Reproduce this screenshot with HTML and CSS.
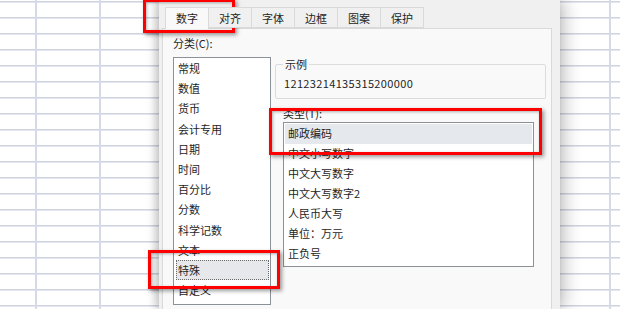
FILE: index.html
```html
<!DOCTYPE html>
<html lang="zh-CN">
<head>
<meta charset="utf-8">
<title>设置单元格格式</title>
<link rel="stylesheet" href="styles.css">
</head>
<body>
<div class="dialog">
  <div class="tabs">
    <div class="tab active">数字</div>
    <div class="tab">对齐</div>
    <div class="tab">字体</div>
    <div class="tab">边框</div>
    <div class="tab">图案</div>
    <div class="tab">保护</div>
  </div>
  <div class="panel">
    <div class="col-left">
      <div class="label">分类(C):</div>
      <div class="listbox cat">
        <div class="item">常规</div>
        <div class="item">数值</div>
        <div class="item">货币</div>
        <div class="item">会计专用</div>
        <div class="item">日期</div>
        <div class="item">时间</div>
        <div class="item">百分比</div>
        <div class="item">分数</div>
        <div class="item">科学记数</div>
        <div class="item">文本</div>
        <div class="item selected">特殊</div>
        <div class="item">自定义</div>
      </div>
    </div>
    <div class="col-right">
      <fieldset class="sample">
        <legend>示例</legend>
        <div class="value">12123214135315200000</div>
      </fieldset>
      <div class="label type-label">类型(T):</div>
      <div class="listbox types">
        <div class="item selected">邮政编码</div>
        <div class="item">中文小写数字</div>
        <div class="item">中文大写数字</div>
        <div class="item">中文大写数字2</div>
        <div class="item">人民币大写</div>
        <div class="item">单位：万元</div>
        <div class="item">正负号</div>
      </div>
    </div>
  </div>
</div>
<div class="mark mark-tab"></div>
<div class="mark mark-type"></div>
<div class="mark mark-cat"></div>
</body>
</html>
```
FILE: styles.css
```css
html, body {
  margin: 0;
  padding: 0;
}
body {
  position: relative;
  width: 620px;
  height: 309px;
  overflow: hidden;
  font-family: "Noto Sans CJK SC", "Noto Sans", sans-serif;
  font-size: 11px;
  color: #1e1e1e;
  background-color: #fff;
  background-image:
    linear-gradient(90deg, transparent 35px, #d6dae6 35px 37px, transparent 37px 99px, #d6dae6 99px 101px, transparent 101px 609px, #d6dae6 609px 611px, transparent 611px),
    repeating-linear-gradient(180deg, transparent 0 1px, #cfd4e1 1px 2px, #e3e6ee 2px 3px, transparent 3px 16px);
}
.dialog {
  position: absolute;
  left: 159px;
  top: 0;
  width: 401px;
  height: 309px;
  box-sizing: border-box;
  display: flex;
  flex-direction: column;
  padding: 7px 8px 0 3px;
  background: #f0f0f0;
  box-shadow: -3px 0 9px rgba(0, 0, 0, 0.22), 6px 0 16px rgba(0, 0, 0, 0.2);
}
.tabs {
  display: flex;
  flex: none;
  margin-left: 3px;
  height: 21px;
  position: relative;
  z-index: 1;
}
.tab {
  box-sizing: border-box;
  height: 21px;
  padding: 0 10px;
  line-height: 20px;
  border: 1px solid #d9d9d9;
  border-left: none;
  background: #f0f0f0;
}
.tab:first-child {
  border-left: 1px solid #d9d9d9;
}
.tab.active {
  background: #f9f9f9;
  height: 22px;
  border-bottom: none;
}
.panel {
  flex: 1;
  min-height: 0;
  display: flex;
  gap: 4px;
  box-sizing: border-box;
  padding: 7px 5px 0 10px;
  border: 1px solid #d9d9d9;
  border-bottom: none;
  background: #f9f9f9;
}
.label {
  line-height: 14px;
  height: 14px;
  white-space: nowrap;
}
.col-left {
  display: flex;
  flex-direction: column;
  width: 98px;
}
.col-left .label {
  margin-bottom: 7px;
}
.listbox {
  box-sizing: border-box;
  background: #fff;
  border: 1px solid #8c9099;
}
.listbox .item {
  box-sizing: border-box;
  height: 20.2px;
  line-height: 19px;
  white-space: nowrap;
}
.cat {
  width: 98px;
  height: 248px;
  flex: none;
}
.cat .item {
  margin: 0 1px 0 2px;
  padding-left: 1px;
  border: 1px solid transparent;
}
.cat .item.selected {
  background: #e6e8ec;
  border: 1px dotted #6b6b6b;
}
.col-right {
  display: flex;
  flex-direction: column;
  width: 271px;
}
.sample {
  margin: 21px 0 0 0;
  padding: 5px 0 8px 8px;
  border: 1px solid #dcdcdc;
  border-radius: 2px;
  min-inline-size: 0;
}
.sample legend {
  margin-left: -1px;
  padding: 0 2px;
  line-height: 14px;
  height: 14px;
}
.value {
  line-height: 14px;
  letter-spacing: 0.35px;
}
.type-label {
  margin: 7px 0 0 8px;
}
.types {
  margin: 2px 0 0 8px;
  width: 251px;
  height: 145px;
  padding-top: 1px;
}
.types .item {
  margin: 0 1px;
  padding-left: 3px;
}
.types .item.selected {
  background: #e5e8ed;
  height: 19.5px;
}
.mark {
  position: absolute;
  box-sizing: border-box;
  border: 3px solid #ff0000;
  box-shadow: 2px 2px 4px rgba(0, 0, 0, 0.4), inset 1px 1px 3px rgba(0, 0, 0, 0.3);
}
.mark-tab {
  left: 143px;
  top: -1px;
  width: 92px;
  height: 34px;
}
.mark-type {
  left: 269px;
  top: 108px;
  width: 273px;
  height: 47px;
}
.mark-cat {
  left: 148px;
  top: 250px;
  width: 132px;
  height: 39px;
}
```
